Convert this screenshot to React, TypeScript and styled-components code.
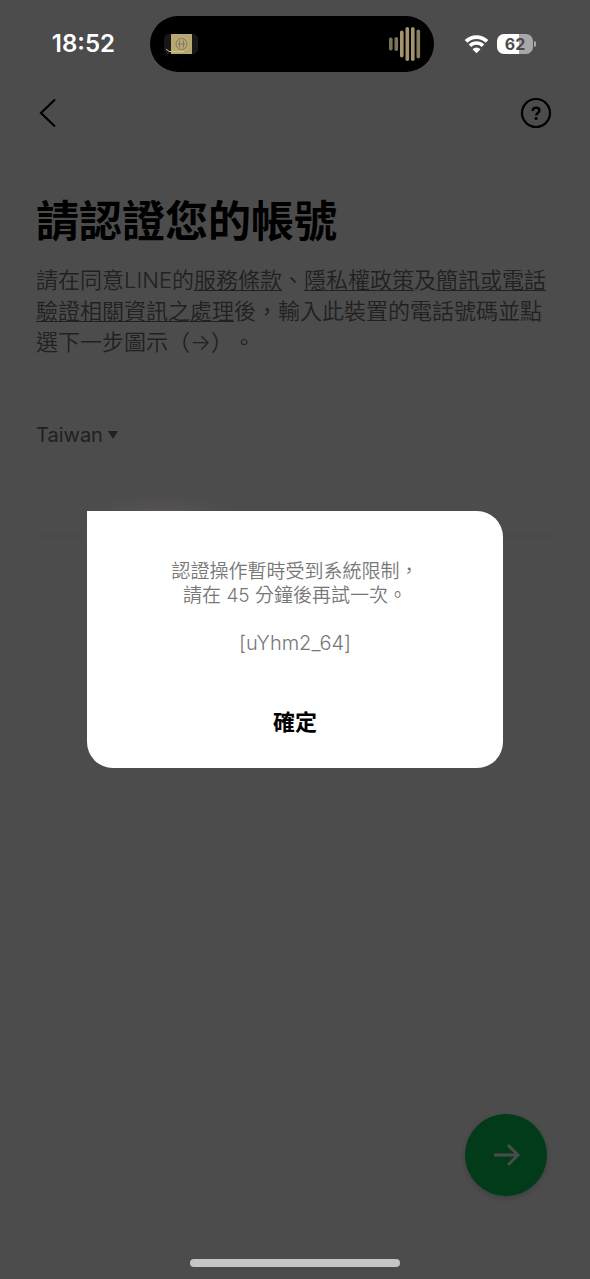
import React from "react";
import styled, { createGlobalStyle } from "styled-components";

const GlobalStyle = createGlobalStyle`
  *, *::before, *::after { box-sizing: border-box; }
  html, body { margin: 0; padding: 0; background: #ffffff; }
  body { font-family: Inter, "Noto Sans CJK TC", sans-serif; text-spacing-trim: space-all; }
  button { font: inherit; border: 0; padding: 0; background: none; color: inherit; cursor: pointer; }
`;

const Screen = styled.div`
  position: relative;
  display: flex;
  flex-direction: column;
  min-height: 100vh;
  background: #ffffff;
`;

const StatusBar = styled.header`
  position: relative;
  z-index: 3;
  display: grid;
  grid-template-columns: 1fr 284px 1fr;
  align-items: center;
  height: 88px;
  padding-right: 6px;
  color: #ffffff;
`;

const Clock = styled.time`
  justify-self: end;
  margin-right: 35px;
  font-size: 24px;
  line-height: 28px;
  font-weight: 600;
`;

const Island = styled.div`
  display: flex;
  align-items: center;
  justify-content: space-between;
  height: 56px;
  padding: 0 13px 0 14px;
  border-radius: 28px;
  background: #000000;
`;

const Indicators = styled.div`
  display: flex;
  align-items: center;
  gap: 8px;
  padding-left: 30px;
`;

const Battery = styled.span`
  position: relative;
  display: flex;
  align-items: center;
  justify-content: center;
  width: 36px;
  height: 20px;
  border-radius: 7px;
  background: linear-gradient(90deg, #ffffff 62%, #a8a8a8 62%);
  color: #4c4c4c;
  font-size: 16px;
  line-height: 20px;
  font-weight: 700;

  &::after {
    content: "";
    position: absolute;
    left: 37px;
    top: 7px;
    width: 2px;
    height: 6px;
    border-radius: 0 2px 2px 0;
    background: #a8a8a8;
  }
`;

const NavBar = styled.nav`
  display: flex;
  align-items: center;
  justify-content: space-between;
  height: 50px;
  padding: 0 38px 0 36px;
`;

const IconButton = styled.button`
  display: flex;
  align-items: center;
  justify-content: center;
`;

const Main = styled.main`
  display: flex;
  flex: 1;
  flex-direction: column;
  align-items: flex-start;
  padding: 51px 36px 0;
`;

const Title = styled.h1`
  margin: 0;
  color: #000000;
  font-size: 43px;
  line-height: 64px;
  font-weight: 700;
`;

const Description = styled.p`
  margin: 12px 0 0;
  color: #6e6e6e;
  font-size: 22px;
  line-height: 31px;
  font-weight: 350;
`;

const TermsLink = styled.a`
  color: inherit;
  text-decoration: underline;
  text-decoration-thickness: 1px;
  text-underline-offset: 2px;
`;

const CountryButton = styled.button`
  display: flex;
  align-items: center;
  gap: 5px;
  margin-top: 63px;
  color: #6e6e6e;
  font-size: 20px;
  line-height: 28px;
`;

const PhoneField = styled.input`
  width: 100%;
  height: 48px;
  margin-top: 40px;
  padding: 0;
  border: 0;
  border-bottom: 2px solid #f4f4f4;
  background: none;
  font-size: 22px;
`;

const Footer = styled.footer`
  display: flex;
  justify-content: flex-end;
  padding: 0 43px 83px;
`;

const NextButton = styled.button`
  display: flex;
  align-items: center;
  justify-content: center;
  width: 82px;
  height: 82px;
  border-radius: 50%;
  background: #06c755;
  box-shadow: 0 2px 6px rgba(0, 0, 0, 0.2);
`;

const Backdrop = styled.div`
  position: absolute;
  inset: 0;
  z-index: 2;
  display: flex;
  align-items: center;
  justify-content: center;
  padding: 0 87px;
  background: rgba(0, 0, 0, 0.7);
`;

const Dialog = styled.section`
  position: relative;
  display: flex;
  flex-direction: column;
  align-items: center;
  width: 100%;
  max-width: 416px;
  padding: 49px 24px 26px;
  border-radius: 0 26px 26px 26px;
  background: #ffffff;

  &::before {
    content: "";
    position: absolute;
    left: 0;
    bottom: 100%;
    width: 150px;
    height: 16px;
    background: radial-gradient(ellipse at 50% 100%, rgba(150, 125, 118, 0.14), rgba(150, 125, 118, 0) 70%);
  }
`;

const Message = styled.p`
  margin: 0;
  color: #777777;
  font-size: 19px;
  line-height: 24px;
  font-weight: 350;
  text-align: center;
`;

const ErrorCode = styled.span`
  font-size: 20px;
  line-height: 20px;
`;

const ConfirmButton = styled.button`
  margin-top: 46px;
  color: #000000;
  font-size: 22px;
  line-height: 40px;
  font-weight: 700;
`;

const HomeIndicator = styled.div`
  position: absolute;
  z-index: 3;
  bottom: 12px;
  left: 50%;
  width: 210px;
  height: 8px;
  margin-left: -105px;
  border-radius: 4px;
  background: #c6c6c6;
`;

const waveBars = [
  { height: 13, color: "#7d735b" },
  { height: 14, color: "#7d735b" },
  { height: 27, color: "#a4946e" },
  { height: 34, color: "#a4946e" },
  { height: 34, color: "#a4946e" },
  { height: 29, color: "#887d60" },
];

function AlbumArt() {
  return (
    <svg width="34" height="20" viewBox="0 0 34 20" aria-hidden="true">
      <rect width="34" height="20" rx="5" fill="#17171a" />
      <rect x="7" width="21" height="20" fill="#baa873" />
      <circle cx="17.5" cy="10" r="5.5" fill="#b5a67b" stroke="#857a5d" />
      <path d="M15.500 6.500v7M19.500 6.500v7M14 10h7" stroke="#857a5d" strokeWidth="1" />
      <path d="M2 15l3 2.500h15" stroke="#c8c8a0" strokeWidth="1" fill="none" />
    </svg>
  );
}

function Waveform() {
  return (
    <svg width="33" height="36" viewBox="0 0 33 36" aria-hidden="true">
      {waveBars.map((bar, i) => (
        <rect key={i} x={i * 5.5 + 1} y={18 - bar.height / 2} width="3.6" height={bar.height} rx="1.8" fill={bar.color} />
      ))}
    </svg>
  );
}

function WifiIcon() {
  return (
    <svg width="25" height="20" viewBox="0 0 25 20" aria-hidden="true">
      <g fill="none" stroke="#ffffff" strokeWidth="3.7">
        <path d="M2 7.400a14.900 14.900 0 0 1 21 0" />
        <path d="M6 11.700a9.200 9.200 0 0 1 13 0" />
      </g>
      <path d="M12.5 19.200l-4-4a5.700 5.700 0 0 1 8 0z" fill="#ffffff" />
    </svg>
  );
}

export default function App() {
  return (
    <>
      <GlobalStyle />
      <Screen>
        <StatusBar>
          <Clock>18:52</Clock>
          <Island>
            <AlbumArt />
            <Waveform />
          </Island>
          <Indicators>
            <WifiIcon />
            <Battery>62</Battery>
          </Indicators>
        </StatusBar>
        <NavBar>
          <IconButton aria-label="返回">
            <svg width="22" height="30" viewBox="0 0 22 30" fill="none" stroke="#000000" strokeWidth="2.2">
              <path d="M19 1.5L5 15l14 13.5" />
            </svg>
          </IconButton>
          <IconButton aria-label="說明">
            <svg width="32" height="32" viewBox="0 0 32 32" fill="none" stroke="#000000">
              <circle cx="16" cy="16" r="14" strokeWidth="2.2" />
              <path d="M12.7 14c.1-2.200 1.500-3.400 3.400-3.400s3.300 1.100 3.300 2.900c0 2.400-3.200 2.600-3.200 5.100" strokeWidth="2.400" />
              <circle cx="16.1" cy="21.5" r="1.6" fill="#000000" stroke="none" />
            </svg>
          </IconButton>
        </NavBar>
        <Main>
          <Title>請認證您的帳號</Title>
          <Description>
            請在同意LINE的<TermsLink href="#terms">服務條款</TermsLink>、<TermsLink href="#privacy">隱私權政策</TermsLink>及<TermsLink href="#verification">簡訊或電話驗證相關資訊之處理</TermsLink>後，輸入此裝置的電話號碼並點選下一步圖示（→）。
          </Description>
          <CountryButton>
            Taiwan
            <svg width="10" height="8" viewBox="0 0 10 8" fill="#6e6e6e" aria-hidden="true">
              <path d="M0 0h10L5 8z" />
            </svg>
          </CountryButton>
          <PhoneField type="tel" aria-label="電話號碼" />
        </Main>
        <Footer>
          <NextButton aria-label="下一步">
            <svg width="30" height="24" viewBox="0 0 30 24" fill="none" stroke="#ffffff" strokeWidth="2.8">
              <path d="M3 12h24M17 2l10 10-10 10" />
            </svg>
          </NextButton>
        </Footer>
        <Backdrop>
          <Dialog role="alertdialog" aria-modal="true" aria-describedby="limit-message">
            <Message id="limit-message">
              認證操作暫時受到系統限制，
              <br />
              請在 45 分鐘後再試一次。
              <br />
              <br />
              <ErrorCode>[uYhm2_64]</ErrorCode>
            </Message>
            <ConfirmButton>確定</ConfirmButton>
          </Dialog>
        </Backdrop>
        <HomeIndicator />
      </Screen>
    </>
  );
}
